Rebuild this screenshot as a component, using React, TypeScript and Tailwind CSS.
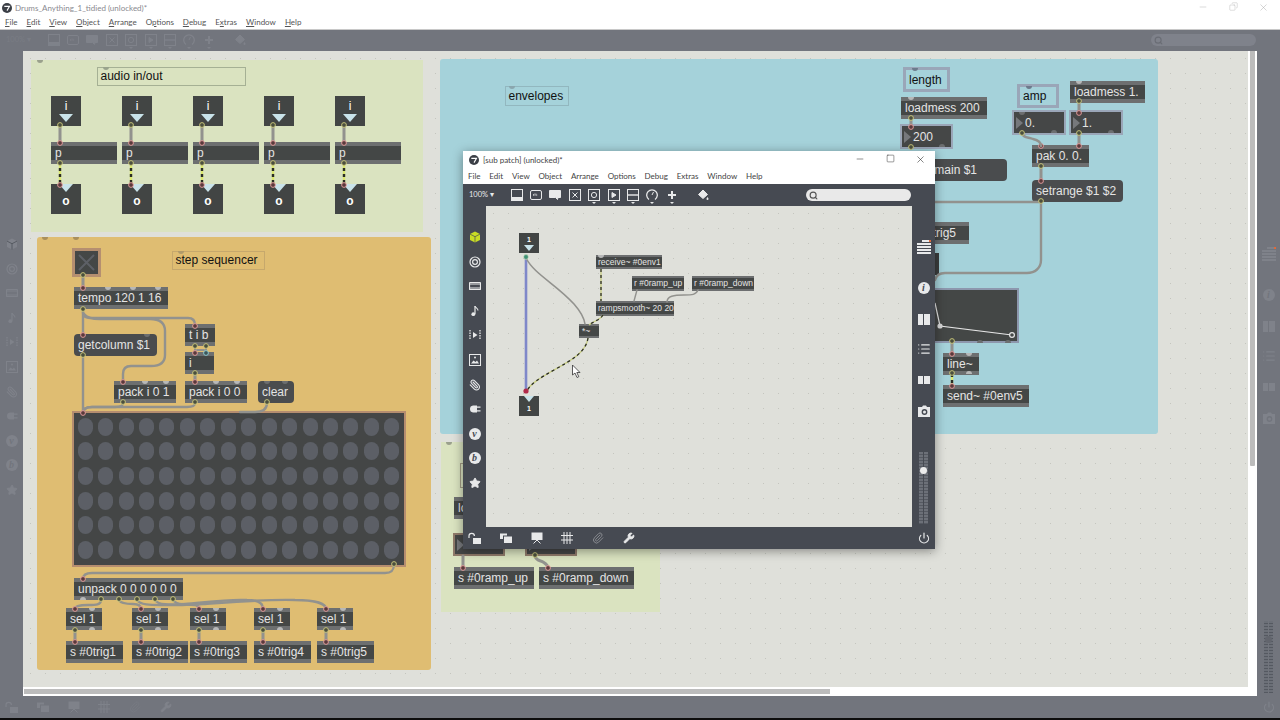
import type { ReactNode } from "react";
import clsx from "clsx";
import { Copy, List, Minus, Paperclip, Power, Search, Square, Star, Wrench, X } from "lucide-react";

const DOTS =
  "bg-[#dfe0da] bg-[radial-gradient(circle,#c4c5be_0.6px,transparent_0.9px)] bg-[size:15px_15px]";

const CORD = "#92928e";

/* ---------- toolbar icons ---------- */

function Ico({ children }: { children: ReactNode }) {
  return (
    <svg viewBox="0 0 12 12" className="h-[12px] w-[12px]" fill="none" stroke="currentColor" strokeWidth="1">
      {children}
    </svg>
  );
}

function Caret() {
  return <span className="absolute bottom-[-1px] left-1/2 -ml-[2px] border-x-[2px] border-t-[2px] border-x-transparent border-t-current" />;
}

const topIcons: { el: ReactNode; caret?: boolean }[] = [
  { el: <Ico><rect x=".5" y=".5" width="11" height="11" /><rect x="1" y="8.5" width="10" height="2.5" fill="currentColor" /></Ico> },
  { el: <Ico><rect x=".5" y="1.5" width="11" height="9" rx="1.5" /><path d="M3.5 7V5m0 .5c.5-.7 1.5-.7 1.5 0V7m0-1.5c.5-.7 1.7-.7 1.7 0V7" strokeWidth=".6" /></Ico> },
  { el: <Ico><path d="M.5 1.5h11v7H9l-.5 2-2-2h-6z" fill="currentColor" /></Ico> },
  { el: <Ico><rect x=".5" y=".5" width="11" height="11" /><path d="M3.5 3.5l5 5m0-5l-5 5" /></Ico> },
  { el: <Ico><rect x=".5" y=".5" width="11" height="11" /><circle cx="6" cy="6" r="2.6" /></Ico>, caret: true },
  { el: <Ico><rect x=".5" y=".5" width="11" height="11" /><path d="M4 3.5l4 2.5-4 2.5z" fill="currentColor" /></Ico>, caret: true },
  { el: <Ico><rect x=".5" y=".5" width="11" height="11" /><path d="M1 6h10" strokeWidth="1.4" /></Ico>, caret: true },
  { el: <Ico><path d="M3 10.5a5.3 5.3 0 1 1 6 0" strokeWidth="1.3" /><path d="M6 6l1.5-3" /></Ico>, caret: true },
  { el: <Ico><path d="M6 2v8M2 6h8" strokeWidth="2" /></Ico>, caret: true },
];

function TopBar({ dim }: { dim?: boolean }) {
  return (
    <div className="flex h-[22px] shrink-0 items-center">
      <div className={clsx("w-[44px] pl-[6px] font-['Lato',sans-serif] text-[7.5px]", dim && "opacity-60")}>100% ▾</div>
      {topIcons.map((it, i) => (
        <div key={i} className="relative flex h-[16px] w-[19.4px] items-center justify-center">
          {it.el}
          {it.caret && <Caret />}
        </div>
      ))}
      <div className="ml-[12px] flex h-[16px] w-[19.4px] items-center justify-center">
        <Ico>
          <path d="M6 1l4.5 4.5L6 9.5 1.5 5.5z" fill="currentColor" />
          <path d="M10.5 8c.8 1 1 1.5 1 2a1 1 0 0 1-2 0c0-.5.2-1 1-2z" fill="currentColor" stroke="none" />
        </Ico>
      </div>
      <div
        className={clsx(
          "ml-auto mr-[24px] flex h-[12px] w-[105px] items-center rounded-full pl-[3px]",
          dim ? "bg-[#7f828b] text-[#6a6d75]" : "bg-[#e9e9e9] text-[#555]"
        )}
      >
        <Search size={9} strokeWidth={3} />
      </div>
    </div>
  );
}

function LeftIcons({ dim }: { dim?: boolean }) {
  const icons: ReactNode[] = [
    <svg key="cube" viewBox="0 0 12 12" className={clsx("h-[12px] w-[12px]", dim ? "text-[#7f828a]" : "text-[#c9dc24]")} fill="currentColor">
      <path d="M6 .5l5 2.6v5.8l-5 2.6-5-2.6V3.1z" />
      <path d="M1 3.1l5 2.6 5-2.6M6 5.7v5.8" stroke="#464a52" strokeWidth=".7" fill="none" />
    </svg>,
    <Ico key="target"><circle cx="6" cy="6" r="5" strokeWidth="1.2" /><circle cx="6" cy="6" r="2.4" strokeWidth="1.2" /></Ico>,
    <Ico key="card"><rect x=".5" y="2.5" width="11" height="7" rx=".5" strokeWidth="1.2" /><path d="M1 4h10M1 8h10" strokeWidth="1" /></Ico>,
    <Ico key="note"><path d="M6 1v8" strokeWidth="1.2" /><circle cx="4.3" cy="9.2" r="1.9" fill="currentColor" stroke="none" /><path d="M6 1c.3 2 3 2 3 4.5" strokeWidth="1.1" /></Ico>,
    <Ico key="seq"><path d="M1 1v10M11 1v10" strokeDasharray="1.5 1" strokeWidth="1.3" /><path d="M4 3l4.5 3L4 9z" fill="currentColor" stroke="none" /></Ico>,
    <Ico key="image"><rect x=".5" y=".5" width="11" height="11" /><path d="M2 9.5l2.5-3 2 1.6L8 6.5l2 3z" fill="currentColor" stroke="none" /><circle cx="6" cy="3.6" r="1" fill="currentColor" stroke="none" /></Ico>,
    <Paperclip key="clip" size={12} strokeWidth={2.2} className="scale-x-[-1]" />,
    <Ico key="plug"><path d="M4 2.5h4v7H4a3.5 3.5 0 0 1-3-3.5 3.5 3.5 0 0 1 3-3.5z" fill="currentColor" stroke="none" /><path d="M8 4.2h3.5M8 7.8h3.5" strokeWidth="1.3" /></Ico>,
    <span key="v" className="flex h-[12px] w-[12px] items-center justify-center rounded-full bg-current font-['Liberation_Serif',serif] text-[10px] font-bold italic leading-none">
      <span className={dim ? "text-[#72757d]" : "text-[#464a52]"}>v</span>
    </span>,
    <span key="b" className="flex h-[12px] w-[12px] items-center justify-center rounded-full bg-current font-['Liberation_Serif',serif] text-[10px] font-bold italic leading-none">
      <span className={dim ? "text-[#72757d]" : "text-[#464a52]"}>b</span>
    </span>,
    <Star key="star" size={12} fill="currentColor" />,
  ];
  return (
    <div className="flex w-[23px] shrink-0 flex-col items-center justify-center">
      {icons.map((el, i) => (
        <div key={i} className="flex h-[24.6px] items-center justify-center">
          {el}
        </div>
      ))}
      <div className="h-[13px]" />
    </div>
  );
}

function RightBar({ dim }: { dim?: boolean }) {
  return (
    <div className="flex w-[23px] shrink-0 flex-col items-center">
      <div className={clsx("flex flex-col items-center", dim ? "mt-[196px]" : "mt-[34px]")}>
        <svg viewBox="0 0 14 14" className="h-[14px] w-[14px]" fill="currentColor">
          <path d="M0 3h14v2H0zM0 6h14v2H0zM0 9h14v2H0zM0 12h14v2H0zM5 0h7v2H5z" />
          <path d="M12 0h2v2h-2z" fill="#e06a3a" />
        </svg>
        <span className="mt-[28px] flex h-[12px] w-[12px] items-center justify-center rounded-full bg-current font-['Liberation_Serif',serif] text-[10px] font-bold italic leading-none">
          <span className={dim ? "text-[#72757d]" : "text-[#464a52]"}>i</span>
        </span>
        <div className="mt-[19.5px] flex h-[11px] w-[12px] gap-[1px]">
          <span className="flex-1 bg-current" />
          <span className="flex-1 bg-current" />
        </div>
        <List size={14} strokeWidth={2} className="mt-[17.5px]" />
        <div className="mt-[20px] flex h-[8px] w-[12px] gap-[1px]">
          <span className="flex-1 bg-current" />
          <span className="flex-1 bg-current" />
        </div>
        <svg viewBox="0 0 12 12" className="mt-[21px] h-[12px] w-[12px]">
          <path d="M0 2h4l1-1.5h3L9 2h3v10H0z" fill="currentColor" />
          <circle cx="6.5" cy="7" r="2.2" fill="none" stroke={dim ? "#72757d" : "#464a52"} strokeWidth="1.4" />
        </svg>
      </div>
      <div className="relative mb-[3px] mt-auto flex h-[72px] gap-[1.5px]">
        <div className="h-full w-[4px] bg-[repeating-linear-gradient(to_bottom,#6c7078_0px,#6c7078_2px,#555961_2px,#555961_3px)]" />
        <div className="h-full w-[4px] bg-[repeating-linear-gradient(to_bottom,#6c7078_0px,#6c7078_2px,#555961_2px,#555961_3px)]" />
        <span className={clsx("absolute left-[1px] top-[15px] h-[7px] w-[7px] rounded-full", dim ? "bg-[#62656d]" : "bg-[#ececec]")} />
      </div>
    </div>
  );
}

function BottomBar() {
  const icons: ReactNode[] = [
    <svg key="lock" viewBox="0 0 14 12" className="h-[12px] w-[14px]" fill="none" stroke="currentColor">
      <path d="M1 6V4a2.7 2.7 0 0 1 5.4 0" strokeWidth="1.2" />
      <path d="M5 6h8v6H5z" fill="currentColor" stroke="none" />
    </svg>,
    <svg key="win" viewBox="0 0 12 12" className="h-[12px] w-[12px]" fill="currentColor">
      <path d="M0 1.5h7v2H3v3.5H0z" />
      <path d="M4 4.5h8v6.5H4z" />
    </svg>,
    <svg key="pres" viewBox="0 0 12 12" className="h-[12px] w-[12px]" fill="currentColor">
      <path d="M.5 .5h11v7.5h-11z" />
      <path d="M6 8l-3.5 3.5M6 8l3.5 3.5" stroke="currentColor" />
    </svg>,
    <svg key="grid" viewBox="0 0 12 12" className="h-[12px] w-[12px]" stroke="currentColor" strokeWidth="1">
      <path d="M0 3.5h12M0 8h12M3 0v12M6 0v12M9 0v12" />
    </svg>,
    <span key="clip" className="opacity-40">
      <Paperclip size={12} strokeWidth={2} />
    </span>,
    <Wrench key="wrench" size={12} fill="currentColor" strokeWidth={1.5} />,
  ];
  return (
    <div className="flex h-[22px] shrink-0 items-center">
      <div className="-ml-[3px] flex">
        {icons.map((el, i) => (
          <div key={i} className="flex w-[30.7px] justify-center">
            {el}
          </div>
        ))}
      </div>
      <div className="ml-auto flex w-[23px] justify-center">
        <Power size={12} strokeWidth={2.4} />
      </div>
    </div>
  );
}

function MaxLogo() {
  return (
    <svg viewBox="0 0 10 10" className="h-[10px] w-[10px] shrink-0">
      <circle cx="5" cy="5" r="5" fill="#3b3f46" />
      <path d="M2.3 3.4h5.2L5 7.6" fill="none" stroke="#fff" strokeWidth="1.1" />
    </svg>
  );
}

/* ---------- patcher objects ---------- */

type ObjProps = { className: string; children?: ReactNode };

function Box({ className, children }: ObjProps) {
  return (
    <div className={clsx("absolute flex h-[22px] items-center whitespace-nowrap border-y-[4px] border-[#6d6f70] bg-[#444746] pl-[4px] text-[12px] text-[#e4e4e4]", className)}>
      {children}
    </div>
  );
}

function Msg({ className, children }: ObjProps) {
  return (
    <div className={clsx("absolute flex h-[22px] items-center whitespace-nowrap rounded-[4px] bg-[#4a4c4e] pl-[4px] text-[12px] text-[#e4e4e4]", className)}>
      {children}
    </div>
  );
}

function Comment({ className, children }: ObjProps) {
  return (
    <div className={clsx("absolute flex items-center whitespace-nowrap text-[12px] text-[#111]", className)}>
      {children}
    </div>
  );
}

function Num({ className, children }: ObjProps) {
  return (
    <div className={clsx("absolute flex items-center border-[2px] bg-[#454747] text-[12px] text-[#e4e4e4]", className)}>
      <span className="ml-[2px] mr-[2px] border-y-[6px] border-l-[7px] border-y-transparent border-l-[#76787c]" />
      {children}
    </div>
  );
}

function InOut({ className, label, out, small }: { className: string; label: string; out?: boolean; small?: boolean }) {
  const tri = small
    ? "border-x-[5px] border-t-[6px] border-x-transparent border-t-[#c9e3ea]"
    : "border-x-[7px] border-t-[8px] border-x-transparent border-t-[#c9e3ea]";
  return (
    <div className={clsx("absolute flex flex-col items-center bg-[#424544] text-white", small ? "h-[20px] w-[20px] text-[7px] leading-[9px]" : "h-[30px] w-[30px] text-[12px] leading-[13px]", label === "i" ? "font-normal" : "font-bold", out ? "justify-start" : "justify-end pb-[1px]", className)}>
      {out ? (
        <>
          <span className={tri} />
          <span className={small ? "mt-[2px]" : "mt-[3px]"}>{label}</span>
        </>
      ) : (
        <>
          <span className="mb-[1px]">{label}</span>
          <span className={clsx(tri, small ? "mb-[1px]" : "mb-[3px]")} />
        </>
      )}
    </div>
  );
}

/* ---------- cords, drawn in screen coordinates ---------- */

function Solid({ d, w = 2.4, c = CORD }: { d: string; w?: number; c?: string }) {
  return <path d={d} fill="none" stroke={c} strokeWidth={w} strokeLinecap="round" />;
}

function Dashed({ d, w = 2, base = "#dbe86f" }: { d: string; w?: number; base?: string }) {
  return (
    <>
      <path d={d} fill="none" stroke={base} strokeWidth={w} />
      <path d={d} fill="none" stroke="#2b2d25" strokeWidth={w} strokeDasharray="3 3" />
    </>
  );
}

function Outlet({ x, y }: { x: number; y: number }) {
  return <circle cx={x} cy={y} r="2.4" fill="#4b4f3f" stroke="#cfcc7e" strokeWidth="0.9" />;
}

function Inlet({ x, y }: { x: number; y: number }) {
  return <circle cx={x} cy={y} r="2.4" fill="#5a3a3c" stroke="#e9a2a0" strokeWidth="0.9" />;
}

const topPorts: [number, number, string?][] = [
  [108, 287], [133, 287], [158, 287], [147, 334, "#6c6e70"], [145, 381], [166, 381], [216, 381], [237, 381],
  [267, 381, "#6c6e70"], [285, 381, "#6c6e70"], [92, 608], [158, 608], [216, 608], [280, 608], [343, 608],
  [181, 251, "#b09a6a"], [106, 67, "#99a38c"], [40, 60, "#9aa08c"], [76, 237, "#a98f5c"], [512, 86, "#8aa6ae"], [915, 68, "#6d7a8c"],
  [1029, 86, "#6d7a8c"], [911, 97], [1079, 81], [969, 353], [1022, 112, "#6c6e70"], [449, 442, "#9aa08c"],
  [45, 237, "#a98f5c"],
];

const bottomPorts: [number, number, string?][] = [
  [83, 600], [92, 630], [158, 630], [216, 630], [280, 630], [343, 630], [969, 374],
  [1054, 133, "#6c6e70"], [1111, 133, "#6c6e70"], [942, 147, "#6c6e70"], [980, 343, "#6c6e70"], [1008, 343, "#6c6e70"],
];

function Half({ x, y, c = "#b7b8b8", up }: { x: number; y: number; c?: string; up?: boolean }) {
  return <path d={up ? `M${x - 3} ${y}a3 3 0 0 1 6 0z` : `M${x - 3} ${y}a3 3 0 0 0 6 0z`} fill={c} />;
}

function MainCords() {
  const audio = [60, 131, 202, 273, 344];
  const sel = [75, 141, 199, 263, 326];
  return (
    <svg viewBox="23 51 1225 637" className="pointer-events-none absolute left-0 top-0 h-[637px] w-[1225px]">
      {topPorts.map(([x, y, c], i) => (
        <Half key={i} x={x} y={y} c={c} />
      ))}
      {bottomPorts.map(([x, y, c], i) => (
        <Half key={i} x={x} y={y} c={c} up />
      ))}

      {audio.map((x) => (
        <g key={x}>
          <Solid d={`M${x} 125V143`} w={3} />
          <Dashed d={`M${x} 162V185`} w={2.4} />
          <Outlet x={x} y={125} />
          <Inlet x={x} y={143} />
          <Outlet x={x} y={163} />
          <Inlet x={x} y={185} />
        </g>
      ))}

      <Solid d="M83 275V288" w={3} />
      <Solid d="M83 309V335" />
      <Solid d="M83 312c0 5 3 6 10 6H188c5 0 7 3 7 7" />
      <Solid d="M84 314c3 4 8 5 16 5H150c10 0 15 4 15 12v24c0 8-5 11-14 11H131c-6 0-8 4-8 8v8" />
      <Solid d="M83 356V412" />
      <Solid d="M123 403c0 3-2 4-8 4H92c-6 0-9 2-9 6" />
      <Solid d="M195 403c0 3-2 4-8 4H92c-6 0-9 2-9 6" />
      <Solid d="M267 403c0 6-4 9-12 9H240" />
      <Solid d="M195 346V353M206 346V353" w={2} />
      <Solid d="M197 350H204" w={2} />
      <Solid d="M195 374V382" w={3} />
      <Solid d="M394 564c0 6-2 9-9 9H92c-6 0-9 2-9 6" />
      <Solid d="M101 600c0 5-5 5-13 5s-13 1-13 4" />
      <Solid d="M119 600c2 4 9 4 14 4s8 2 8 5" />
      <Solid d="M137 600c3 5 14 5 24 5h18c12 0 20-2 20 4" />
      <Solid d="M155 600c3 5 14 5 30 4s40-5 62-4c10 0 16 3 16 9" />
      <Solid d="M173 600c3 5 14 5 30 4s62-5 92-4c18 0 31 3 31 9" />
      {sel.map((x) => (
        <g key={x}>
          <Inlet x={x} y={609} />
          <Solid d={`M${x} 630V642`} w={3} />
          <Outlet x={x} y={630} />
          <Inlet x={x} y={642} />
        </g>
      ))}
      {[101, 119, 137, 155, 173].map((x) => (
        <Outlet key={x} x={x} y={599} />
      ))}
      <Outlet x={83} y={275} />
      <Inlet x={83} y={288} />
      <Outlet x={83} y={309} />
      <Inlet x={83} y={335} />
      <Inlet x={195} y={326} />
      <Outlet x={195} y={346} />
      <Outlet x={206} y={346} />
      <Inlet x={195} y={353} />
      <circle cx={206} cy={353} r="2.4" fill="#3d5558" stroke="#8fd0d8" strokeWidth="0.9" />
      <Outlet x={195} y={373} />
      <Inlet x={195} y={382} />
      <Inlet x={123} y={382} />
      <Outlet x={83} y={355} />
      <Outlet x={123} y={402} />
      <Outlet x={195} y={402} />
      <Outlet x={267} y={402} />
      <Inlet x={83} y={413} />
      <Outlet x={394} y={564} />
      <Inlet x={83} y={579} />

      <Solid d="M911 118V126" w={3} />
      <Outlet x={911} y={118} />
      <Inlet x={911} y={127} />
      <Outlet x={911} y={147} />
      <Solid d="M1079 101V113M1079 133V146" w={3} />
      <Outlet x={1079} y={101} />
      <Inlet x={1079} y={113} />
      <Outlet x={1079} y={133} />
      <Inlet x={1041} y={146} />
      <Inlet x={1079} y={146} />
      <Solid d="M1022 133c1 5 6 4 11 6 5 1 8 3 8 7" />
      <Outlet x={1022} y={133} />
      <Solid d="M1041 166V181" w={3} />
      <Outlet x={1041} y={166} />
      <Inlet x={1041} y={181} />
      <Solid d="M1041 202H930" />
      <Solid d="M1041 202V260c0 8-6 13-14 13H945c-6 0-9 3-10 7" />
      <Outlet x={1041} y={201} />

      <path d="M935 303L940 326L1012 335" fill="none" stroke="#e6e6e6" strokeWidth="1.2" />
      <circle cx={940} cy={326} r="2.6" fill="#d8d8d8" />
      <circle cx={1012} cy={335} r="2.4" fill="#444746" stroke="#e6e6e6" strokeWidth="1.2" />
      <Solid d="M952 342V354" w={3} />
      <Outlet x={952} y={341} />
      <Inlet x={952} y={354} />
      <Dashed d="M952 374V386" w={2.4} />
      <Outlet x={952} y={373} />
      <Inlet x={952} y={386} />

      <Solid d="M463 556V568" w={3} />
      <Inlet x={463} y={568} />
      <Solid d="M535 556c1 5 5 4 8 6s5 3 5 6" w={3} />
      <Outlet x={535} y={555} />
      <Inlet x={548} y={568} />
    </svg>
  );
}

function SubCords() {
  return (
    <svg viewBox="486 206 427 320" className="pointer-events-none absolute left-0 top-0 h-[320px] w-[427px]">
      <Half x={601} y={255} c="#b7b8b8" />
      <path d="M526 257V392" stroke="#7f88c9" strokeWidth="2.6" />
      <Solid d="M526 258c8 16 30 26 48 46 7 8 10 13 11 20" w={1.6} />
      <Dashed d="M588 338c-2 14-16 22-34 32-14 8-24 14-27 21" w={1.3} base="#c7cd80" />
      <Dashed d="M601 269V301" w={1.3} base="#c7cd80" />
      <Dashed d="M603 315c-3 5-9 6-14 10" w={1.3} base="#c7cd80" />
      <Solid d="M637 290l-3 11" w={1.4} />
      <Solid d="M698 290c-2 5-6 5-14 5-10 0-17 1-17 7" w={1.4} />
      <circle cx={526} cy={257} r="2.4" fill="#3f8f74" stroke="#cfe0c0" strokeWidth=".6" />
      <circle cx={526} cy={391} r="2.6" fill="#b02a4a" />
      <path d="M572.5 365v10l2.5-2 2 4.5 1.8-.8-2-4.2h3.2z" fill="#fff" stroke="#333" strokeWidth=".8" />
    </svg>
  );
}

/* ---------- the two windows ---------- */

const menuMain = [
  ["", "F", "ile"], ["", "E", "dit"], ["", "V", "iew"], ["", "O", "bject"], ["", "A", "rrange"],
  ["O", "p", "tions"], ["", "D", "ebug"], ["E", "x", "tras"], ["", "W", "indow"], ["", "H", "elp"],
];

const matrixDots = Array.from({ length: 96 });

function MainCanvas() {
  return (
    <div className={clsx("relative min-h-0 flex-1 overflow-hidden", DOTS)}>
      {/* panels */}
      <div className="absolute left-[8px] top-[9px] h-[172px] w-[392px] bg-[#dae3c0]" />
      <div className="absolute left-[14px] top-[186px] h-[433px] w-[394px] rounded-[3px] bg-[#dfbd72]" />
      <div className="absolute left-[417px] top-[8px] h-[375px] w-[718px] rounded-[3px] bg-[#a5d2da]" />
      <div className="absolute left-[418px] top-[391px] h-[170px] w-[219px] bg-[#dae3c0]" />

      {/* audio in/out */}
      <Comment className="left-[74px] top-[16px] h-[19px] w-[149px] border-[1.5px] border-[#a5b094] pb-[1px] pl-[2.5px]">audio in/out</Comment>
      {["left-[28px]", "left-[99px]", "left-[170px]", "left-[241px]", "left-[312px]"].map((pos) => (
        <div key={pos}>
          <InOut className={clsx(pos, "top-[45px]")} label="i" />
          <Box className={clsx(pos, "top-[91px] w-[66px]")}>p</Box>
          <InOut className={clsx(pos, "top-[133px]")} label="o" out />
        </div>
      ))}

      {/* step sequencer */}
      <div className="absolute left-[49px] top-[197px] h-[29px] w-[29px] border-[3px] border-[#b58f70] bg-[#444746]">
        <svg viewBox="0 0 23 23" className="h-full w-full" stroke="#5d6066" strokeWidth="2">
          <path d="M4 4l15 15M19 4L4 19" />
        </svg>
      </div>
      <Comment className="left-[149px] top-[200px] h-[19px] w-[93px] border-[1.5px] border-[#c6a86c] pb-[1px] pl-[2.5px]">step sequencer</Comment>
      <Box className="left-[51px] top-[236px] w-[94px]">tempo 120 1 16</Box>
      <Msg className="left-[51px] top-[283px] w-[83px]">getcolumn $1</Msg>
      <Box className="left-[162px] top-[273px] w-[30px]">t i b</Box>
      <Box className="left-[162px] top-[301px] w-[29px]">i</Box>
      <Box className="left-[91px] top-[330px] w-[62px]">pack i 0 1</Box>
      <Box className="left-[162px] top-[330px] w-[62px]">pack i 0 0</Box>
      <Msg className="left-[235px] top-[330px] w-[36px]">clear</Msg>
      <div className="absolute left-[49px] top-[360px] h-[156px] w-[334px] border-[2px] border-[#b58d6f] bg-[#444646] pl-[1px] pt-[1.5px]">
        <div className="grid grid-cols-[repeat(16,20.45px)] grid-rows-[repeat(6,24.6px)]">
          {matrixDots.map((_, i) => (
            <div key={i} className="flex items-center justify-center">
              <span className="h-[18px] w-[15px] rounded-full bg-[#5c5f66]" />
            </div>
          ))}
        </div>
      </div>
      <Box className="left-[51px] top-[527px] w-[109px]">unpack 0 0 0 0 0 0</Box>
      {["left-[43px]", "left-[109px]", "left-[167px]", "left-[231px]", "left-[294px]"].map((pos) => (
        <Box key={pos} className={clsx(pos, "top-[557px] w-[36px]")}>sel 1</Box>
      ))}
      <Box className="left-[43px] top-[590px] w-[57px]">s #0trig1</Box>
      <Box className="left-[109px] top-[590px] w-[56px]">s #0trig2</Box>
      <Box className="left-[167px] top-[590px] w-[57px]">s #0trig3</Box>
      <Box className="left-[231px] top-[590px] w-[57px]">s #0trig4</Box>
      <Box className="left-[294px] top-[590px] w-[57px]">s #0trig5</Box>

      {/* envelopes */}
      <Comment className="left-[482px] top-[35px] h-[20px] w-[64px] border-[1.5px] border-[#92b7bf] pl-[2.5px]">envelopes</Comment>
      <Comment className="left-[880px] top-[16px] h-[25px] w-[47px] border-[3px] border-[#9aa6b8] pl-[3px]">length</Comment>
      <Box className="left-[878px] top-[46px] w-[86px]">loadmess 200</Box>
      <Num className="left-[877px] top-[73px] h-[25px] w-[53px] border-[#9aa6b8]">200</Num>
      <Msg className="left-[878px] top-[108px] w-[106px]">setdomain $1</Msg>
      <Comment className="left-[994px] top-[33px] h-[24px] w-[42px] border-[3px] border-[#9aa6b8] pl-[3px]">amp</Comment>
      <Box className="left-[1047px] top-[30px] w-[75px]">loadmess 1.</Box>
      <Num className="left-[989px] top-[59px] h-[25px] w-[54px] border-[#9aa6b8]">0.</Num>
      <Num className="left-[1046px] top-[59px] h-[25px] w-[54px] border-[#9aa6b8]">1.</Num>
      <Box className="left-[1009px] top-[94px] w-[57px]">pak 0. 0.</Box>
      <Msg className="left-[1009px] top-[129px] w-[91px]">setrange $1 $2</Msg>
      <Box className="left-[885px] top-[171px] w-[61px]">r #0trig5</Box>
      <div className="absolute left-[877px] top-[202px] h-[22px] w-[39px] bg-[#3c3e3e]" />
      <div className="absolute left-[877px] top-[237px] h-[55px] w-[119px] border-[2px] border-[#8d97ad] bg-[#444746]" />
      <Box className="left-[920px] top-[302px] w-[36px]">line~</Box>
      <Box className="left-[920px] top-[334px] w-[86px]">send~ #0env5</Box>

      {/* lower green panel */}
      <div className="absolute left-[437px] top-[412px] h-[25px] w-[4px] border-y-[1.5px] border-l-[1.5px] border-[#a09c84]" />
      <Box className="left-[431px] top-[446px] w-[40px]">lo</Box>
      <Num className="left-[430px] top-[482px] h-[23px] w-[52px] border-[#8f7a6a]" />
      <Num className="left-[502px] top-[482px] h-[23px] w-[52px] border-[#8f7a6a]" />
      <Box className="left-[431px] top-[516px] w-[80px]">s #0ramp_up</Box>
      <Box className="left-[516px] top-[516px] w-[95px]">s #0ramp_down</Box>

      <MainCords />
    </div>
  );
}

function SubWindow() {
  return (
    <div className="absolute left-[463px] top-[151px] flex h-[398px] w-[472px] flex-col bg-[#464a52] text-[#e8e9ea] shadow-[0_2px_10px_rgba(0,0,0,0.4)]">
      <div className="flex h-[17px] shrink-0 items-center bg-white pl-[6px] font-['Lato',sans-serif] text-[8px] text-[#444]">
        <MaxLogo />
        <span className="ml-[4px]">[sub patch] (unlocked)*</span>
        <div className="ml-auto flex text-[#222]">
          <span className="flex w-[30px] justify-center"><Minus size={10} strokeWidth={1.2} /></span>
          <span className="flex w-[30px] justify-center"><Square size={9} strokeWidth={1.2} /></span>
          <span className="flex w-[30px] justify-center"><X size={11} strokeWidth={1.2} /></span>
        </div>
      </div>
      <div className="flex h-[16px] shrink-0 items-center gap-[8.8px] bg-white pl-[5px] font-['Lato',sans-serif] text-[8px] text-[#444]">
        {["File", "Edit", "View", "Object", "Arrange", "Options", "Debug", "Extras", "Window", "Help"].map((m) => (
          <span key={m}>{m}</span>
        ))}
      </div>
      <TopBar />
      <div className="flex min-h-0 flex-1">
        <LeftIcons />
        <div className={clsx("relative flex-1 overflow-hidden font-['Liberation_Sans',sans-serif]", DOTS)}>
          <InOut className="left-[33px] top-[27px]" label="1" small />
          <InOut className="left-[33px] top-[190px]" label="1" out small />
          <Box className="left-[110px] top-[49px] !h-[14px] w-[66px] !border-y-[2px] !pl-[2px] !text-[8.5px]">receive~ #0env1</Box>
          <Box className="left-[146px] top-[70px] !h-[15px] w-[52px] !border-y-[2px] !pl-[2px] !text-[8.5px]">r #0ramp_up</Box>
          <Box className="left-[206px] top-[70px] !h-[15px] w-[62px] !border-y-[2px] !pl-[2px] !text-[8.5px]">r #0ramp_down</Box>
          <Box className="left-[110px] top-[95px] !h-[15px] w-[78px] !border-y-[2px] !pl-[2px] !text-[8.5px]">rampsmooth~ 20 20</Box>
          <Box className="left-[93px] top-[118px] !h-[14px] w-[20px] !border-y-[2px] !pl-[3px] !text-[8.5px]">*~</Box>
          <SubCords />
        </div>
        <RightBar />
      </div>
      <BottomBar />
    </div>
  );
}

export default function App() {
  return (
    <div className="relative flex h-[720px] w-[1280px] flex-col overflow-hidden bg-black font-['Liberation_Sans',sans-serif]">
      <div className="flex min-h-0 flex-1 flex-col bg-[#72757d] text-[#7f828a]">
        <div className="flex h-[15px] shrink-0 items-center bg-white pl-[2px] font-['Lato',sans-serif] text-[8px] text-[#8a8a90]">
          <MaxLogo />
          <span className="ml-[3px]">Drums_Anything_1_tidied (unlocked)*</span>
          <div className="ml-auto flex pr-[2px] text-[#a8a8a8]">
            <span className="flex w-[30px] justify-center"><Minus size={10} strokeWidth={1} /></span>
            <span className="flex w-[30px] justify-center"><Copy size={9} strokeWidth={1} className="scale-x-[-1]" /></span>
            <span className="flex w-[30px] justify-center"><X size={11} strokeWidth={1} /></span>
          </div>
        </div>
        <div className="flex h-[13.5px] shrink-0 items-center gap-[9px] bg-white pl-[5px] font-['Lato',sans-serif] text-[8px] text-[#555]">
          {menuMain.map(([a, b, c]) => (
            <span key={b + c}>
              {a}
              <u>{b}</u>
              {c}
            </span>
          ))}
        </div>
        <div className="h-[0.5px] shrink-0 bg-[#c8c8c8]" />
        <TopBar dim />
        <div className="flex min-h-0 flex-1">
          <LeftIcons dim />
          <div className="flex min-w-0 flex-1 flex-col bg-white">
            <div className="flex min-h-0 flex-1">
              <MainCanvas />
              <div className="flex w-[9px] shrink-0 justify-center">
                <div className="h-[415px] w-[5px] rounded-b-[1px] bg-[#bcbcbc]" />
              </div>
            </div>
            <div className="flex h-[9px] shrink-0 items-center">
              <div className="ml-[1px] h-[5px] w-[806px] bg-[#bcbcbc]" />
            </div>
          </div>
          <RightBar dim />
        </div>
        <BottomBar />
      </div>
      <div className="h-[2px] shrink-0 bg-[#0d0d0d]" />
      <SubWindow />
    </div>
  );
}
